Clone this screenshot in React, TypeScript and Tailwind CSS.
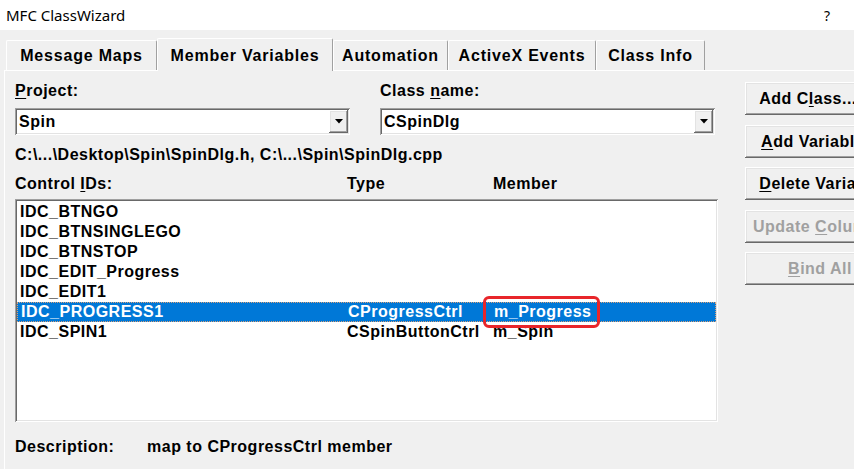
import React from 'react';

// Underlined accelerator letter, as in classic Win32 dialogs
const U = ({ children }: { children: React.ReactNode }) => <span className="underline underline-offset-2">{children}</span>;

const raised =
  'shadow-[inset_-1px_-1px_#696969,inset_1px_1px_#ffffff,inset_-2px_-2px_#a0a0a0,inset_2px_2px_#e3e3e3]';
const sunken =
  'shadow-[inset_1px_1px_#a0a0a0,inset_-1px_-1px_#ffffff,inset_2px_2px_#696969,inset_-2px_-2px_#e3e3e3]';

const tabs = [
  { label: 'Message Maps', w: 'w-[151px]' },
  { label: 'Member Variables', w: 'w-[176px]', active: true },
  { label: 'Automation', w: 'w-[115px]' },
  { label: 'ActiveX Events', w: 'w-[148px]' },
  { label: 'Class Info', w: 'w-[109px]' },
];

const rows = [
  { id: 'IDC_BTNGO', type: '', member: '' },
  { id: 'IDC_BTNSINGLEGO', type: '', member: '' },
  { id: 'IDC_BTNSTOP', type: '', member: '' },
  { id: 'IDC_EDIT_Progress', type: '', member: '' },
  { id: 'IDC_EDIT1', type: '', member: '' },
  { id: 'IDC_PROGRESS1', type: 'CProgressCtrl', member: 'm_Progress', selected: true },
  { id: 'IDC_SPIN1', type: 'CSpinButtonCtrl', member: 'm_Spin' },
];

function Combo({ value }: { value: string }) {
  return (
    <div className={`relative h-[27px] bg-white flex items-center pl-[4px] ${sunken}`}>
      <span>{value}</span>
      <div className={`absolute right-[2px] top-[2px] w-[19px] h-[23px] bg-[#f0f0f0] flex items-center justify-center ${raised}`}>
        <svg width="8" height="5" viewBox="0 0 8 5">
          <path d="M0 0h8L4 4.5z" fill="#000" />
        </svg>
      </div>
    </div>
  );
}

function Button({ children, disabled, className = '' }: { children: React.ReactNode; disabled?: boolean; className?: string }) {
  return (
    <div
      className={`h-[33px] w-[150px] shrink-0 bg-[#f0f0f0] flex items-center justify-center whitespace-nowrap ${raised} ${
        disabled ? 'text-[#a0a0a0]' : 'text-black'
      } ${className}`}
    >
      <span>{children}</span>
    </div>
  );
}

export default function App() {
  return (
    <div className="w-[854px] h-[469px] overflow-hidden bg-[#f0f0f0] text-black">
      {/* Title bar */}
      <div className="h-[30px] bg-white flex items-center justify-between pl-[6px] pr-[24px] font-['Noto_Sans',sans-serif] text-[15px]">
        <span>MFC ClassWizard</span>
        <span className="text-[14px]">?</span>
      </div>

      <div className="font-['Liberation_Sans',Arial,sans-serif] font-bold text-[16px] tracking-[0.5px] leading-[18px]">
        {/* Tabs */}
        <div className="mt-[8px] h-[32px] flex items-end pl-[6px] relative z-10 tracking-[0.8px]">
          {tabs.map((t) => (
            <div
              key={t.label}
              className={`${t.w} shrink-0 flex items-center justify-center bg-[#f0f0f0] border-t border-l border-white border-r border-r-[#a0a0a0] rounded-t-[2px] ${
                t.active ? 'h-[33px] -mb-px pt-[1px]' : 'h-[30px]'
              }`}
            >
              {t.label}
            </div>
          ))}
        </div>

        {/* Tab panel */}
        <div className="ml-[4px] h-[420px] border-t border-l border-white flex pl-[10px] pt-[11px]">
          {/* Left column */}
          <div className="w-[703px] shrink-0 flex flex-col">
            <div className="grid grid-cols-[335px_335px] gap-x-[30px]">
              <span>
                <U>P</U>roject:
              </span>
              <span>
                Class <U>n</U>ame:
              </span>
              <div className="mt-[8px]">
                <Combo value="Spin" />
              </div>
              <div className="mt-[8px]">
                <Combo value="CSpinDlg" />
              </div>
            </div>

            <div className="mt-[11px] whitespace-nowrap">C:\...\Desktop\Spin\SpinDlg.h, C:\...\Spin\SpinDlg.cpp</div>

            <div className="mt-[11px] flex">
              <span className="w-[332px]">
                Control <U>I</U>Ds:
              </span>
              <span className="w-[146px]">Type</span>
              <span>Member</span>
            </div>

            {/* Control list */}
            <div className={`relative mt-[6px] h-[223px] bg-white px-[2px] pt-[3px] ${sunken}`}>
              {rows.map((r) => (
                <div
                  key={r.id}
                  className={`h-[20px] flex items-center whitespace-nowrap ${
                    r.selected ? 'bg-[#0078d7] text-white border border-dotted border-[#d9a27a]' : ''
                  }`}
                >
                  <span className="w-[330px] pl-[3px]">{r.id}</span>
                  <span className="w-[146px]">{r.type}</span>
                  <span>{r.member}</span>
                </div>
              ))}
              {/* Annotation highlight */}
              <div className="absolute left-[468px] top-[97px] w-[117px] h-[32px] border-[3px] border-[#e8262a] rounded-[6px]" />
            </div>

            <div className="mt-[16px] flex whitespace-nowrap">
              <span className="w-[132px]">Description:</span>
              <span>map to CProgressCtrl member</span>
            </div>
          </div>

          {/* Right column buttons */}
          <div className="ml-[27px] shrink-0 flex flex-col">
            <Button className="pr-[24px]">
              Add C<U>l</U>ass...
            </Button>
            <Button className="mt-[10px]">
              <U>A</U>dd Variable...
            </Button>
            <Button className="mt-[9px]">
              <U>D</U>elete Variable
            </Button>
            <Button disabled className="mt-[10px]">
              Update <U>C</U>olumns
            </Button>
            <Button disabled className="mt-[9px]">
              <U>B</U>ind All
            </Button>
          </div>
        </div>
      </div>
    </div>
  );
}
